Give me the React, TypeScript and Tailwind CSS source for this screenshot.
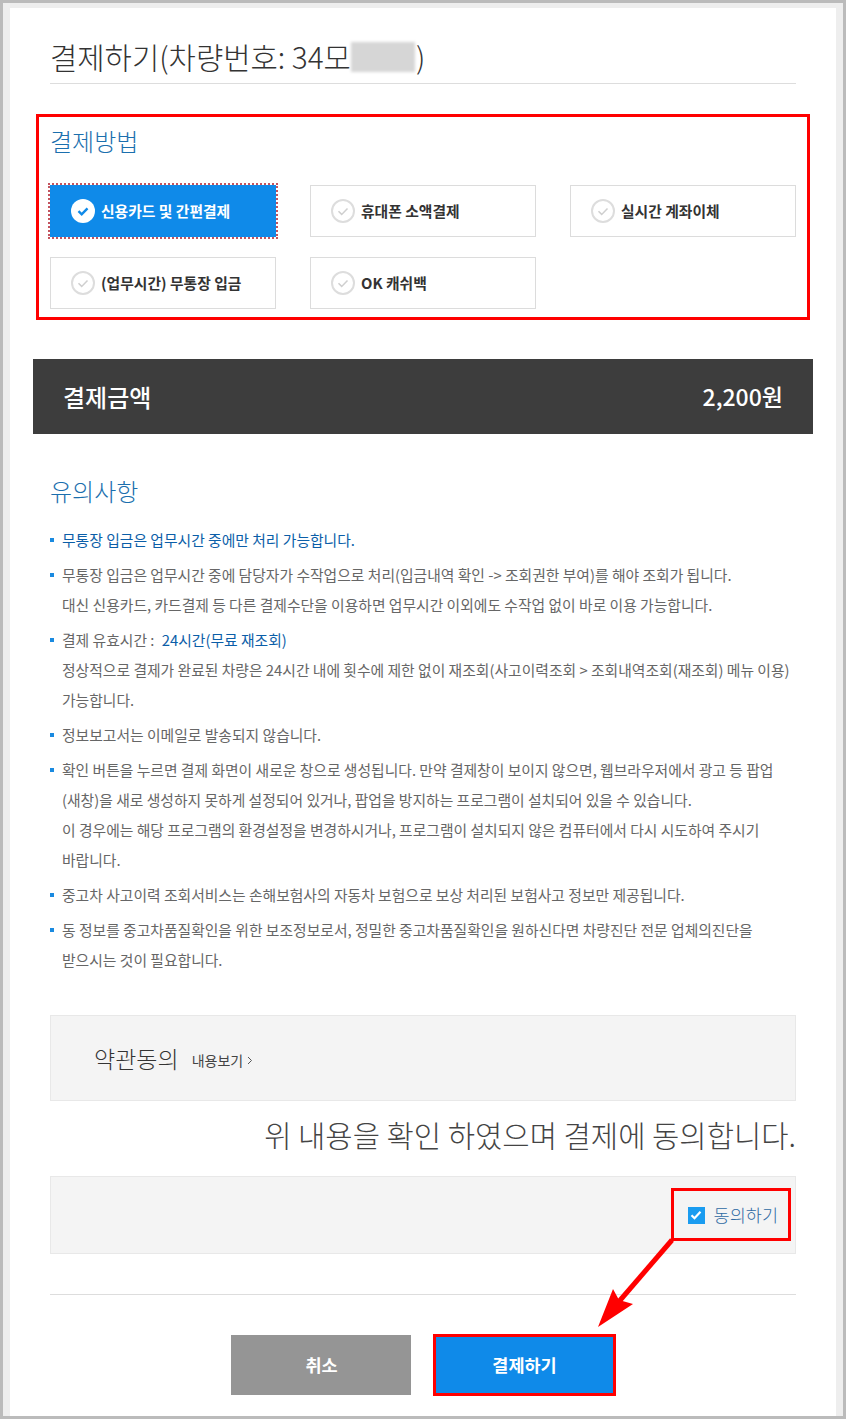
import React from 'react';

const FONT = "font-['Noto_Sans_CJK_KR','Noto_Sans',sans-serif]";

const methods = [
  { label: '신용카드 및 간편결제', active: true },
  { label: '휴대폰 소액결제', active: false },
  { label: '실시간 계좌이체', active: false },
  { label: '(업무시간) 무통장 입금', active: false },
  { label: 'OK 캐쉬백', active: false },
];

const CheckCircle: React.FC<{ active: boolean }> = ({ active }) => (
  <svg width="24" height="24" viewBox="0 0 24 24" className="shrink-0" fill="none">
    {active ? (
      <>
        <circle cx="12" cy="12" r="12" fill="#fff" />
        <path d="M7.5 12.2l3.2 3.2 5.8-6" stroke="#0f8ae9" strokeWidth="2.4" />
      </>
    ) : (
      <>
        <circle cx="12" cy="12" r="11" stroke="#dddddd" strokeWidth="2" fill="#fff" />
        <path d="M7.5 12.2l3.2 3.2 5.8-6" stroke="#cfcfcf" strokeWidth="1.5" />
      </>
    )}
  </svg>
);

const MethodButton: React.FC<{ label: string; active: boolean }> = ({ label, active }) => (
  <div
    className={
      active
        ? 'relative h-[52px] flex items-center gap-[6px] pl-[21px] bg-[#0f8ae9] text-white text-[14.8px] font-bold'
        : 'h-[52px] flex items-center gap-[6px] pl-[20px] border border-[#dcdcdc] bg-white text-[#333] text-[14.8px] font-bold'
    }
  >
    {active && <span className="absolute -inset-[2px] border-2 border-dotted border-[#c4545e]" />}
    <CheckCircle active={active} />
    <span>{label}</span>
  </div>
);

const Item: React.FC<{ children: React.ReactNode; blue?: boolean }> = ({ children, blue }) => (
  <li className={`relative pl-[12px] ${blue ? 'text-[#0b5ea8]' : 'text-[#666]'}`}>
    <span className="absolute left-0 top-[13px] w-[4px] h-[4px] bg-[#1a8ae0]" />
    {children}
  </li>
);

export default function App() {
  return (
    <div className={`${FONT} w-[846px] h-[1419px] border-[3px] border-[#bbbbbb] bg-white overflow-hidden`}>
      <div className="h-full border-x-[7px] border-t-[5px] border-[#eeeeee] px-[40px] relative">
        {/* 제목 */}
        <div className="h-[76px] border-b border-[#dddddd] flex items-end pb-[2px]">
          <h1 className="text-[29.7px] leading-[48px] font-light text-[#333] flex items-center">
            결제하기(차량번호: 34모
            <span className="inline-block w-[64px] h-[30px] bg-[#d6d6d6] blur-[1.5px] mr-[1px]" />)
          </h1>
        </div>

        {/* 결제방법 */}
        <section className="relative mt-[30px] pt-[9px]">
          <span className="absolute -left-[14px] -right-[14px] top-0 h-[206px] border-[3px] border-[#ff0000] pointer-events-none" />
          <h2 className="text-[24px] leading-[36px] font-light text-[#1b6fae]">결제방법</h2>
          <div className="grid grid-cols-3 gap-x-[34px] gap-y-[20px] mt-[26px]">
            {methods.map((m) => (
              <MethodButton key={m.label} label={m.label} active={m.active} />
            ))}
          </div>
        </section>

        {/* 결제금액 */}
        <div className="-mx-[17px] mt-[50px] h-[75px] bg-[#3d3d3d] text-white flex items-center justify-between px-[30px] text-[24px] font-medium">
          <span>결제금액</span>
          <span className="text-[23px]">2,200원</span>
        </div>

        {/* 유의사항 */}
        <h2 className="mt-[39px] text-[24px] leading-[36px] font-light text-[#1b6fae]">유의사항</h2>
        <ul className="mt-[16px] flex flex-col gap-[5px] text-[14.8px] leading-[30px] whitespace-nowrap">
          <Item blue>무통장 입금은 업무시간 중에만 처리 가능합니다.</Item>
          <Item>
            무통장 입금은 업무시간 중에 담당자가 수작업으로 처리(입금내역 확인 -&gt; 조회권한 부여)를 해야 조회가 됩니다.
            <br />
            대신 신용카드, 카드결제 등 다른 결제수단을 이용하면 업무시간 이외에도 수작업 없이 바로 이용 가능합니다.
          </Item>
          <Item>
            결제 유효시간 : <span className="ml-[4px] text-[#0b5ea8]">24시간(무료 재조회)</span>
            <br />
            정상적으로 결제가 완료된 차량은 24시간 내에 횟수에 제한 없이 재조회(사고이력조회 &gt; 조회내역조회(재조회) 메뉴 이용)
            <br />
            가능합니다.
          </Item>
          <Item>정보보고서는 이메일로 발송되지 않습니다.</Item>
          <Item>
            확인 버튼을 누르면 결제 화면이 새로운 창으로 생성됩니다. 만약 결제창이 보이지 않으면, 웹브라우저에서 광고 등 팝업
            <br />
            (새창)을 새로 생성하지 못하게 설정되어 있거나, 팝업을 방지하는 프로그램이 설치되어 있을 수 있습니다.
            <br />
            이 경우에는 해당 프로그램의 환경설정을 변경하시거나, 프로그램이 설치되지 않은 컴퓨터에서 다시 시도하여 주시기
            <br />
            바랍니다.
          </Item>
          <Item>중고차 사고이력 조회서비스는 손해보험사의 자동차 보험으로 보상 처리된 보험사고 정보만 제공됩니다.</Item>
          <Item>
            동 정보를 중고차품질확인을 위한 보조정보로서, 정밀한 중고차품질확인을 원하신다면 차량진단 전문 업체의진단을
            <br />
            받으시는 것이 필요합니다.
          </Item>
        </ul>

        {/* 약관동의 */}
        <div className="mt-[40px] h-[86px] border border-[#e8e8e8] bg-[#f4f4f4] flex items-center gap-[13px] pl-[43px]">
          <span className="text-[23px] font-light text-[#333]">약관동의</span>
          <span className="text-[14px] text-[#444] mt-[4px] flex items-center gap-[4px]">
            내용보기
            <svg width="6" height="9" viewBox="0 0 6 9" fill="none">
              <path d="M1 1l3.5 3.5L1 8" stroke="#555" strokeWidth="1" />
            </svg>
          </span>
        </div>
        <p className="mt-[10px] text-right text-[29.7px] leading-[48px] font-light text-[#444]">
          위 내용을 확인 하였으며 결제에 동의합니다.
        </p>
        <div className="relative mt-[17px] h-[78px] border border-[#e8e8e8] bg-[#f4f4f4] flex items-center justify-end gap-[9px] pr-[17px]">
          <span className="w-[17px] h-[17px] bg-[#1a9cf0] flex items-center justify-center">
            <svg width="12" height="12" viewBox="0 0 12 12" fill="none">
              <path d="M1.5 6.2l3 3 6-6.5" stroke="#fff" strokeWidth="2.2" />
            </svg>
          </span>
          <span className="text-[17.5px] font-light text-[#2f6aa3]">동의하기</span>
          <span className="absolute right-[4px] top-[11px] w-[120px] h-[53px] border-[3px] border-[#ff0000]" />
        </div>

        <div className="mt-[40px] border-t border-[#dddddd] pt-[40px] pr-[2px] flex justify-center gap-[23px]">
          <button className="w-[180px] h-[60px] pl-[2px] bg-[#959595] text-white text-[17.5px] font-bold">취소</button>
          <button className="relative w-[180px] h-[60px] pl-[2px] bg-[#0f8ae9] text-white text-[17.5px] font-bold">
            결제하기
            <span className="absolute -inset-y-[1px] -left-[1px] -right-[2px] border-[3px] border-[#ff0000]" />
          </button>
        </div>

        {/* 화살표 */}
        <svg className="absolute left-[-10px] top-[-8px] pointer-events-none" width="846" height="1419" viewBox="0 0 846 1419" fill="none">
          <path d="M672 1240L616 1305" stroke="#ff0000" strokeWidth="5" />
          <path d="M598 1327L613 1289L619 1300L633 1304Z" fill="#ff0000" />
        </svg>
      </div>
    </div>
  );
}
